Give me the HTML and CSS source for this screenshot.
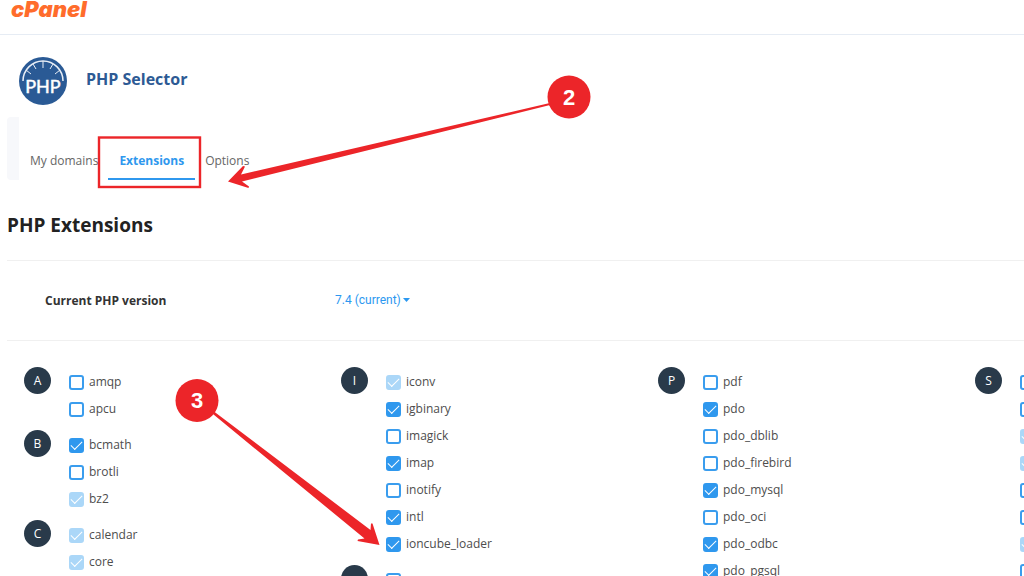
FILE: index.html
```html
<!DOCTYPE html>
<html lang="en">
<head>
<meta charset="utf-8">
<title>cPanel - PHP Selector</title>
<link rel="stylesheet" href="styles.css">
</head>
<body>
<header class="topbar"><a class="logo" href="#">cPanel</a></header>
<main class="page">
  <div class="title">
    <svg class="title-icon" viewBox="0 0 48 48" aria-hidden="true">
      <circle cx="24" cy="24" r="24" fill="#2a5a95"/>
      <g fill="none" stroke="#e8eef6" stroke-width="1">
        <path d="M4 24a20 20 0 0 1 40 0" stroke-width="1.5"/>
        <path d="M24 4v7M14 7l3 5M34 7l-3 5M7 13l5 4M41 13l-5 4"/>
      </g>
      <text x="24" y="36" text-anchor="middle" class="icon-text">PHP</text>
    </svg>
    <h1>PHP Selector</h1>
  </div>
  <nav class="tabs">
    <a href="#">My domains</a>
    <a href="#" class="active" aria-current="page">Extensions</a>
    <a href="#">Options</a>
  </nav>
  <h2>PHP Extensions</h2>
  <div class="version">
    <label for="version">Current PHP version</label>
    <div class="version-pick">
      <select id="version"><option>7.4 (current)</option></select>
      <svg class="caret" viewBox="0 0 7 4" aria-hidden="true"><path d="M0 0h7L3.500 4z" fill="#2b98f0"/></svg>
    </div>
  </div>
  <div class="columns">
    <div class="column">
      <section class="group"><span class="letter">A</span><div class="list">
        <label><input type="checkbox">amqp</label>
        <label><input type="checkbox">apcu</label>
      </div></section>
      <section class="group"><span class="letter">B</span><div class="list">
        <label><input type="checkbox" checked>bcmath</label>
        <label><input type="checkbox">brotli</label>
        <label><input type="checkbox" checked disabled>bz2</label>
      </div></section>
      <section class="group"><span class="letter">C</span><div class="list">
        <label><input type="checkbox" checked disabled>calendar</label>
        <label><input type="checkbox" checked disabled>core</label>
      </div></section>
    </div>
    <div class="column">
      <section class="group"><span class="letter">I</span><div class="list">
        <label><input type="checkbox" checked disabled>iconv</label>
        <label><input type="checkbox" checked>igbinary</label>
        <label><input type="checkbox">imagick</label>
        <label><input type="checkbox" checked>imap</label>
        <label><input type="checkbox">inotify</label>
        <label><input type="checkbox" checked>intl</label>
        <label><input type="checkbox" checked>ioncube_loader</label>
      </div></section>
      <section class="group"><span class="letter"></span><div class="list">
        <label><input type="checkbox" aria-label="Extension"></label>
      </div></section>
    </div>
    <div class="column">
      <section class="group"><span class="letter">P</span><div class="list">
        <label><input type="checkbox">pdf</label>
        <label><input type="checkbox" checked>pdo</label>
        <label><input type="checkbox">pdo_dblib</label>
        <label><input type="checkbox">pdo_firebird</label>
        <label><input type="checkbox" checked>pdo_mysql</label>
        <label><input type="checkbox">pdo_oci</label>
        <label><input type="checkbox" checked>pdo_odbc</label>
        <label><input type="checkbox" checked>pdo_pgsql</label>
      </div></section>
    </div>
    <div class="column">
      <section class="group"><span class="letter">S</span><div class="list">
        <label><input type="checkbox" aria-label="Extension"></label>
        <label><input type="checkbox" aria-label="Extension"></label>
        <label><input type="checkbox" aria-label="Extension" checked disabled></label>
        <label><input type="checkbox" aria-label="Extension" checked disabled></label>
        <label><input type="checkbox" aria-label="Extension"></label>
        <label><input type="checkbox" aria-label="Extension"></label>
        <label><input type="checkbox" aria-label="Extension" checked disabled></label>
        <label><input type="checkbox" aria-label="Extension"></label>
      </div></section>
    </div>
  </div>
</main>
<svg class="notes" width="1024" height="576" viewBox="0 0 1024 576">
  <rect x="99" y="137.500" width="101" height="49.500" fill="none" stroke="#ec2529" stroke-width="2.400"/>
  <g fill="#ec2529">
    <path d="M552 102.500L241 174.500L245 166.500L243 166L228 181.500L248.500 188L249 186.500L242 181.500L552 104.500z"/>
    <path d="M212 410L370.500 530L371 523.500L372.500 523.500L379.500 545L357.500 541L358 539.500L364.500 538.500L210.500 412z"/>
    <circle cx="569" cy="97" r="21.500"/>
    <circle cx="197" cy="400.500" r="21.500"/>
  </g>
  <text class="note-text" x="569" y="105" text-anchor="middle">2</text>
  <text class="note-text" x="197" y="408" text-anchor="middle">3</text>
</svg>
</body>
</html>
```

FILE: styles.css
```css
* { box-sizing: border-box; }
html, body { margin: 0; height: 100%; }
body {
  overflow: hidden;
  background: #fff;
  color: #4d4d4d;
  font: 12px/27px "Open Sans", sans-serif;
}
h1, h2 { margin: 0; }
a { color: inherit; text-decoration: none; }
.topbar { height: 35px; border-bottom: 1px solid #e6ecf4; padding-left: 11px; }
.logo {
  display: block;
  color: #ff6c2c;
  font: italic 900 22px/18px Inter, sans-serif;
}
.page { padding-left: 7px; overflow: hidden; }
.title { display: flex; align-items: center; gap: 19px; padding: 22px 0 12px 12px; }
.title-icon { width: 48px; height: 48px; }
.icon-text { font: 18px Lato, sans-serif; fill: #fff; stroke: #fff; stroke-width: 0.5px; }
h1 { color: #2d5a94; font-size: 16px; font-weight: 700; line-height: 22px; padding-bottom: 5px; }
.tabs {
  display: flex;
  align-items: flex-end;
  height: 63px;
  padding-left: 11px;
  border-left: 12px solid #f7f8fb;
  border-radius: 4px 0 0 4px;
  color: #666;
}
.tabs a { line-height: 39px; }
.tabs .active {
  margin: 0 10px;
  padding: 0 11px;
  color: #2f98ee;
  font-weight: 700;
  box-shadow: inset 0 -2px #2f98ee;
}
h2 { color: #222; font-size: 19px; line-height: 26px; font-weight: 700; padding: 32px 0 22px; }
.version {
  display: grid;
  grid-template-columns: 290px 1fr;
  align-items: center;
  height: 81px;
  padding-left: 38px;
  border-top: 1px solid #f0f0f0;
  border-bottom: 1px solid #f0f0f0;
  color: #333;
  font-weight: 700;
}
.version-pick { display: flex; align-items: center; gap: 2px; padding-bottom: 1px; }
select {
  appearance: none;
  border: 0;
  padding: 0;
  background: none;
  color: #2b98f0;
  font: 12px/20px Roboto, sans-serif;
}
.caret { width: 7px; height: 4px; }
.columns { display: grid; grid-template-columns: repeat(4, minmax(317px, 1fr)); padding: 26px 0 0 17px; }
.column { display: flex; flex-direction: column; gap: 8px; }
.group { display: flex; gap: 18px; }
.letter {
  width: 27px;
  height: 27px;
  border-radius: 50%;
  background: #293a4a;
  color: #fff;
  text-align: center;
}
.list { padding-top: 1px; }
.list label { display: flex; align-items: center; gap: 5px; height: 27px; }
input {
  appearance: none;
  width: 15px;
  height: 15px;
  margin: 1px 0 0;
  border: 2px solid #3a9dee;
  border-radius: 3px;
  background: #fff;
}
input:checked { display: grid; place-items: center; background: #2f98ee; border-color: #2f98ee; }
input:checked::before {
  content: "";
  width: 10px;
  height: 5px;
  margin-bottom: 3px;
  border: solid #fff;
  border-width: 0 0 1px 1px;
  transform: rotate(-45deg);
}
input:disabled { background: #abd7f8; border-color: #abd7f8; }
.notes { position: absolute; left: 0; top: 0; pointer-events: none; }
.note-text { font: bold 22px "Liberation Sans", sans-serif; fill: #fff; }
```
